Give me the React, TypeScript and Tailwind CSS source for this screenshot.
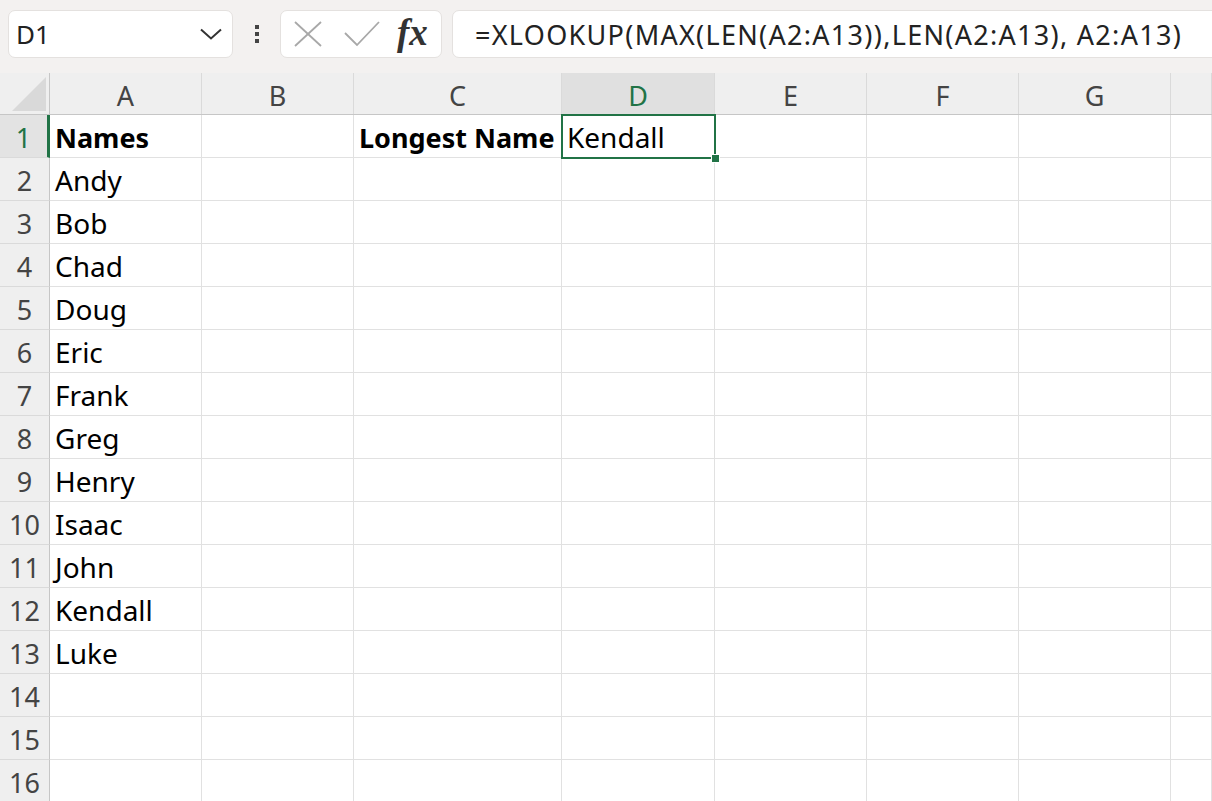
import React from "react";

const cols = [
  { label: "A", w: "w-[152px]" },
  { label: "B", w: "w-[152px]" },
  { label: "C", w: "w-[208px]" },
  { label: "D", w: "w-[153px]" },
  { label: "E", w: "w-[152px]" },
  { label: "F", w: "w-[152px]" },
  { label: "G", w: "w-[152px]" },
  { label: "", w: "flex-1" },
];

const names = ["Andy", "Bob", "Chad", "Doug", "Eric", "Frank", "Greg", "Henry", "Isaac", "John", "Kendall", "Luke"];

// row data: index -> { colIndex: text }
const rows: { [col: number]: string }[] = [
  { 0: "Names", 2: "Longest Name", 3: "Kendall" },
  ...names.map((n) => ({ 0: n })),
  {},
  {},
  {},
];

const FormulaBar = () => (
  <div className="h-[73px] bg-[#f3f1f0] flex items-start pt-[10px] pl-[8px] overflow-hidden">
    {/* name box */}
    <div className="w-[225px] h-[48px] bg-white rounded-[7px] border border-[#e4e1df] flex items-center justify-between pl-[7px] pr-[10px]">
      <span className="text-[26px] text-[#222] leading-none">D1</span>
      <svg width="22" height="12" viewBox="0 0 22 12">
        <polyline points="1,1.5 11,10.5 21,1.5" fill="none" stroke="#333" strokeWidth="2" />
      </svg>
    </div>
    {/* dots */}
    <div className="w-[47px] h-[48px] flex flex-col items-center justify-center gap-[3px]">
      <div className="w-[4px] h-[4px] bg-[#444]" />
      <div className="w-[4px] h-[4px] bg-[#444]" />
      <div className="w-[4px] h-[4px] bg-[#444]" />
    </div>
    {/* cancel / enter / fx */}
    <div className="w-[162px] h-[48px] bg-white rounded-[7px] border border-[#e4e1df] flex items-center pl-[13px]">
      <svg width="28" height="26" viewBox="0 0 28 26">
        <line x1="1" y1="1" x2="27" y2="25" stroke="#a8a8a8" strokeWidth="1.8" />
        <line x1="27" y1="1" x2="1" y2="25" stroke="#a8a8a8" strokeWidth="1.8" />
      </svg>
      <svg width="36" height="26" viewBox="0 0 36 26" className="ml-[22px]">
        <polyline points="1,12 13,24 35,1" fill="none" stroke="#a8a8a8" strokeWidth="1.8" />
      </svg>
      <span
        className="ml-[17px] text-[37px] italic font-bold text-[#333] leading-none pb-[4px]"
        style={{ fontFamily: '"Liberation Serif", serif' }}
      >
        fx
      </span>
    </div>
    {/* formula */}
    <div className="ml-[10px] flex-1 mr-[-20px] h-[48px] bg-white rounded-[7px] border border-[#e4e1df] flex items-center pl-[22px]">
      <span className="text-[27px] tracking-[1.3px] text-[#222] leading-none whitespace-nowrap">
        =XLOOKUP(MAX(LEN(A2:A13)),LEN(A2:A13), A2:A13)
      </span>
    </div>
  </div>
);

const HeaderRow = () => (
  <div className="flex h-[42px] bg-[#efefef] border-b border-[#c6c6c6]">
    <div className="w-[50px] h-full border-r border-[#c6c6c6] flex items-end justify-end pr-[3px] pb-[3px]">
      <div className="w-[34px] h-[34px] bg-[#d9d9d9] [clip-path:polygon(100%_0,100%_100%,0_100%)]" />
    </div>
    {cols.map((c, i) => (
      <div
        key={i}
        className={`${c.w} h-full border-r border-[#dadada] flex justify-center pt-[3px] leading-[39px] text-[27px] ${
          c.label === "D" ? "bg-[#e0e0e0] text-[#217346]" : "text-[#444]"
        }`}
      >
        {c.label}
      </div>
    ))}
  </div>
);

export default function App() {
  return (
    <div
      className="w-[1212px] h-[801px] overflow-hidden bg-white"
      style={{ fontFamily: '"Noto Sans", sans-serif' }}
    >
      <FormulaBar />
      <HeaderRow />
      {rows.map((row, r) => (
        <div key={r} className="flex h-[43px]">
          <div
            className={`w-[50px] h-full border-b border-[#dadada] flex justify-center pt-[3px] leading-[39px] text-[27px] ${
              r === 0
                ? "bg-[#e3e3e3] text-[#217346] border-r-[3px] border-r-[#217346]"
                : "bg-[#efefef] text-[#444] border-r border-r-[#c6c6c6]"
            }`}
          >
            {r + 1}
          </div>
          {cols.map((c, ci) => {
            const text = row[ci];
            const bold = r === 0 && (ci === 0 || ci === 2);
            const selected = r === 0 && ci === 3;
            return (
              <div
                key={ci}
                className={`${c.w} h-full border-r border-b border-[#e1e1e1] relative pl-[5px] pt-[3px] leading-[39px] text-black whitespace-nowrap ${
                  bold ? "font-bold text-[27px]" : "text-[28px]"
                }`}
              >
                {text}
                {selected && (
                  <div className="absolute z-10 left-[-1px] top-[-1px] right-[-2px] bottom-[-2px] border-2 border-[#217346]">
                    <div className="absolute right-[-6px] bottom-[-6px] w-[9px] h-[9px] bg-[#217346] border border-white" />
                  </div>
                )}
              </div>
            );
          })}
        </div>
      ))}
    </div>
  );
}
